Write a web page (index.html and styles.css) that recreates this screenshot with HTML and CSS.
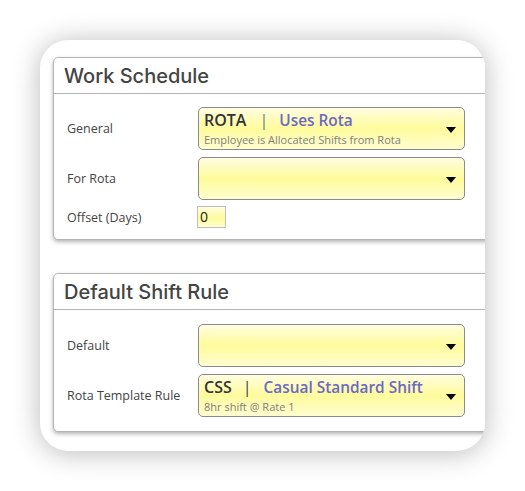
FILE: index.html
```html
<!DOCTYPE html>
<html>
<head>
<meta charset="utf-8">
<link rel="stylesheet" href="styles.css">
</head>
<body>
<div class="card">
  <section class="panel panel-work">
    <h2 class="panel-title">Work Schedule</h2>
    <div class="panel-body">
      <div class="row">
        <span class="label">General</span>
        <div class="select">
          <div class="sel-text">
            <div class="sel-main"><span class="code">ROTA</span><span class="pipe">|</span><span class="desc">Uses Rota</span></div>
            <div class="sel-sub">Employee is Allocated Shifts from Rota</div>
          </div>
          <span class="arrow"></span>
        </div>
      </div>
      <div class="row">
        <span class="label">For Rota</span>
        <div class="select"><div class="sel-text"></div><span class="arrow"></span></div>
      </div>
      <div class="row row-small">
        <span class="label">Offset (Days)</span>
        <div class="num-input">0</div>
      </div>
    </div>
  </section>
  <section class="panel panel-shift">
    <h2 class="panel-title">Default Shift Rule</h2>
    <div class="panel-body">
      <div class="row">
        <span class="label">Default</span>
        <div class="select"><div class="sel-text"></div><span class="arrow"></span></div>
      </div>
      <div class="row">
        <span class="label">Rota Template Rule</span>
        <div class="select">
          <div class="sel-text">
            <div class="sel-main"><span class="code">CSS</span><span class="pipe pipe-dark">|</span><span class="desc">Casual Standard Shift</span></div>
            <div class="sel-sub">8hr shift @ Rate 1</div>
          </div>
          <span class="arrow"></span>
        </div>
      </div>
    </div>
  </section>
</div>
</body>
</html>
```
FILE: styles.css
```css
html, body {
  margin: 0;
  padding: 0;
  background: #ffffff;
}
body {
  font-family: "Open Sans", "Liberation Sans", sans-serif;
  color: #444;
  width: 525px;
  height: 491px;
  overflow: hidden;
}
.card {
  margin: 40px 0 0 40px;
  width: 445px;
  height: 411px;
  box-sizing: border-box;
  border-radius: 28px;
  background: #fff;
  box-shadow: 0 2px 28px rgba(0, 0, 0, 0.28);
  overflow: hidden;
  padding: 17px 0 0 13px;
}
.panel {
  width: 470px;
  box-sizing: border-box;
  border: 1px solid #b4b4b4;
  border-radius: 5px;
  background: #fff;
  box-shadow: 0 2px 4px rgba(0, 0, 0, 0.3);
}
.panel-shift {
  margin-top: 33px;
}
.panel-title {
  margin: 0;
  height: 36px;
  box-sizing: border-box;
  border-bottom: 1px solid #b4b4b4;
  padding: 6px 0 0 10px;
  font-family: "Inter", "Open Sans", sans-serif;
  font-weight: 500;
  font-size: 20px;
  line-height: 24px;
  color: #444;
}
.panel-body {
  display: flex;
  flex-direction: column;
  gap: 7px;
  padding: 13px 0 11px 13px;
}
.panel-shift .panel-body {
  gap: 7px;
  padding: 14px 0 14px 13px;
}
.row {
  display: grid;
  grid-template-columns: 131px 267px;
  align-items: center;
}
.row-small {
  margin-top: -1px;
}
.label {
  font-size: 12.5px;
  color: #444;
}
.select {
  height: 43px;
  box-sizing: border-box;
  border: 1px solid #8a8a8a;
  border-radius: 5px;
  background: linear-gradient(to bottom, #fffde0 0%, #fffb9c 50%, #fffdd0 100%);
  display: flex;
  align-items: center;
  padding: 0 8px 0 5px;
}
.sel-text {
  flex: 1;
  min-width: 0;
}
.sel-main {
  font-size: 16px;
  line-height: 20px;
  white-space: nowrap;
}
.code {
  font-weight: 600;
  color: #333;
}
.pipe {
  color: #5a7f86;
  font-weight: 400;
  margin: 0 11px 0 13px;
}
.pipe-dark {
  color: #3a3a4a;
  margin: 0 12px 0 11px;
}
.desc {
  font-weight: 600;
  font-size: 15.4px;
  color: #6b69c4;
}
.sel-sub {
  font-size: 11px;
  line-height: 15px;
  margin-top: 1px;
  color: #808080;
  white-space: nowrap;
}
.arrow {
  width: 0;
  height: 0;
  border-left: 5px solid transparent;
  border-right: 5px solid transparent;
  border-top: 6px solid #000;
  margin-top: 2px;
}
.num-input {
  width: 29px;
  height: 22px;
  margin-left: -1px;
  box-sizing: border-box;
  border: 1px solid #bdbdbd;
  background: linear-gradient(to bottom, #fffde0, #fffb9c 55%, #fffdd0);
  font-size: 14px;
  line-height: 20px;
  padding-left: 2px;
  color: #222;
}
```
